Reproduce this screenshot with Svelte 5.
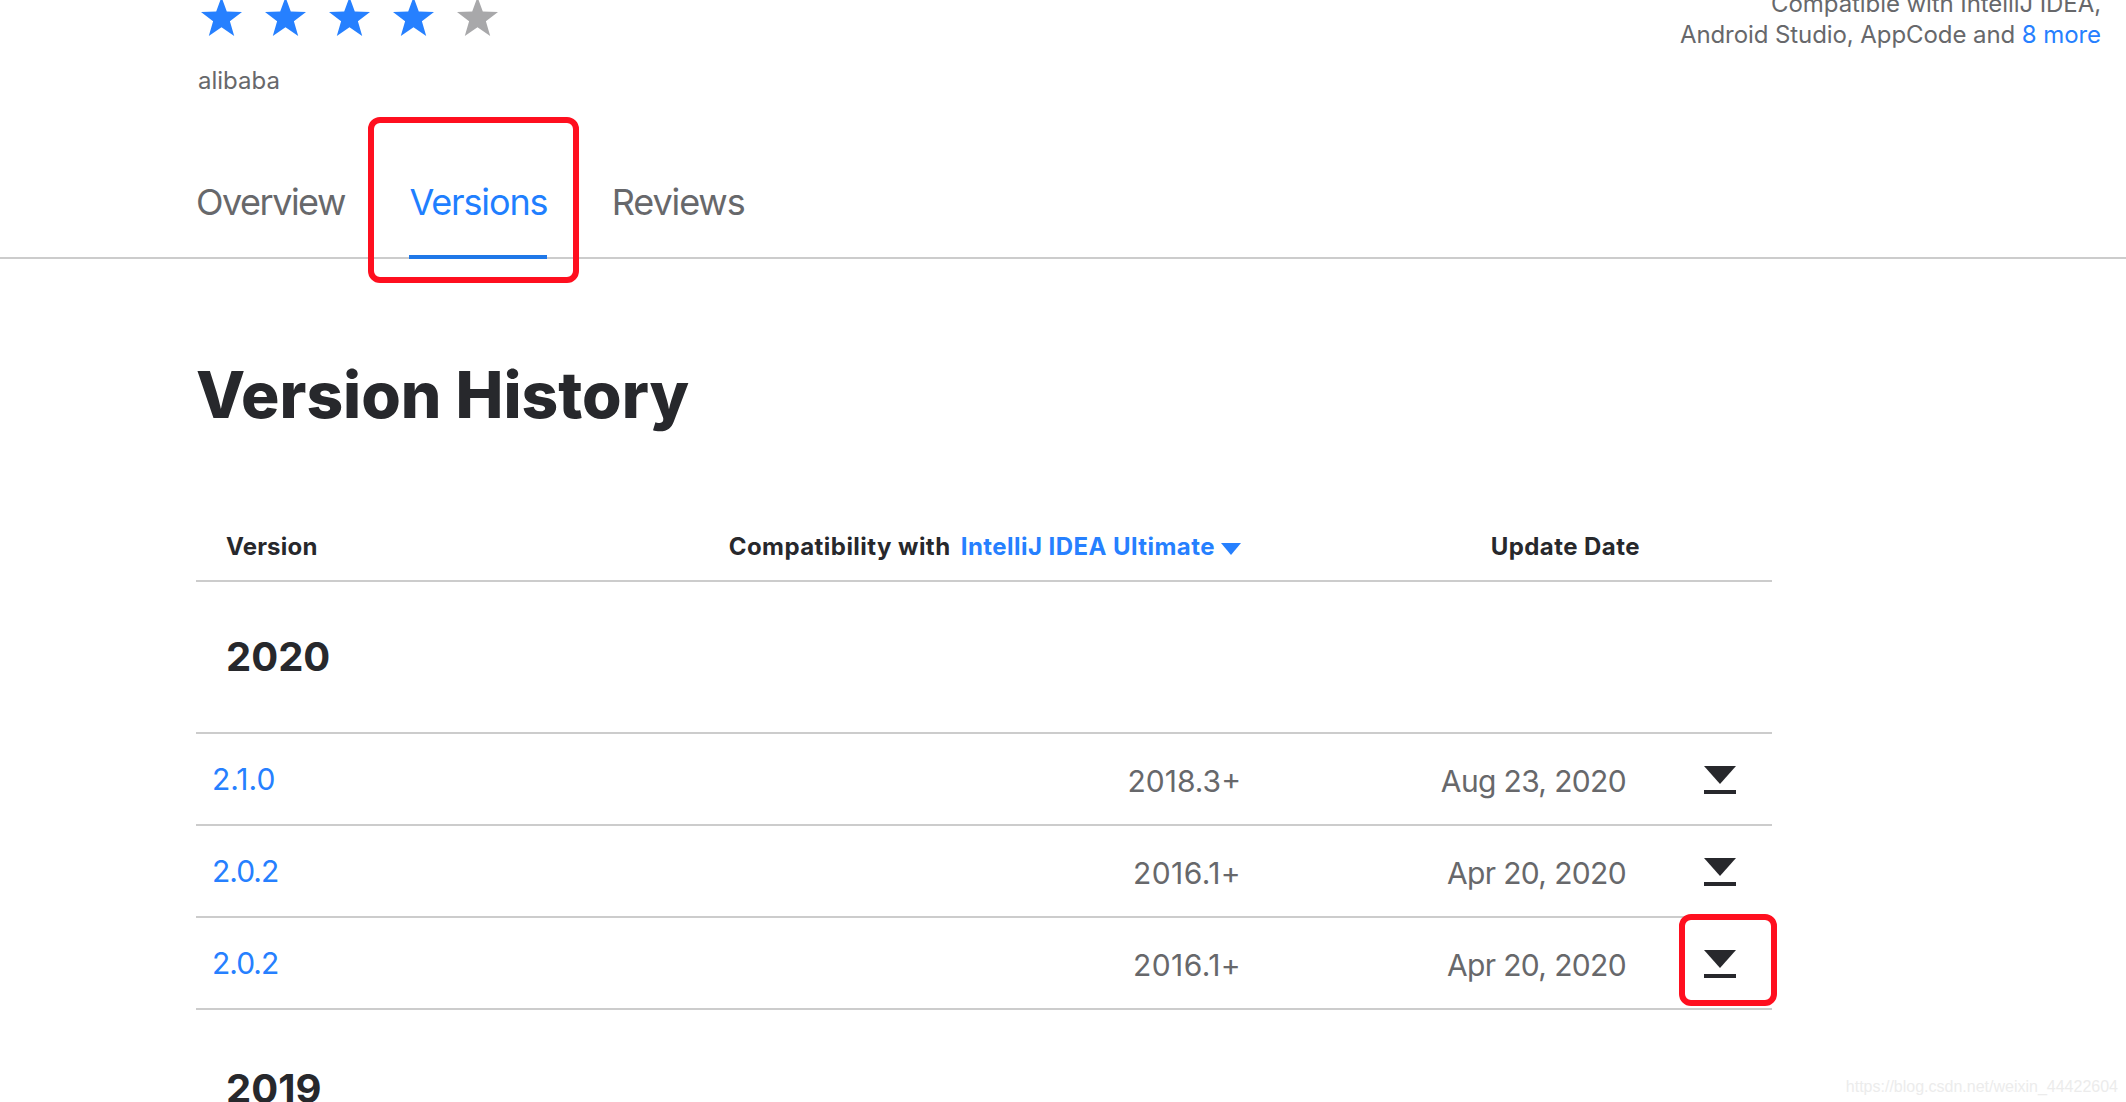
<script>
  const stars = [true, true, true, true, false];
  const rows = [
    { v: '2.1.0', c: '2018.3+', d: 'Aug 23, 2020' },
    { v: '2.0.2', c: '2016.1+', d: 'Apr 20, 2020' },
    { v: '2.0.2', c: '2016.1+', d: 'Apr 20, 2020' }
  ];
</script>

<div class="page">
  <header class="top">
    <div class="left">
      <div class="stars">
        {#each stars as on}
          <svg class="star" class:on viewBox="0 0 41 39" width="41" height="39"><polygon points="20.5,0 25.8,14.6 41,14.9 28.9,24.3 33.2,39 20.5,30.3 7.8,39 12.1,24.3 0,14.9 15.2,14.6" /></svg>
        {/each}
      </div>
      <div class="vendor">alibaba</div>
    </div>
    <div class="compat">Compatible with IntelliJ IDEA,<br />Android Studio, AppCode and <a href="#more">8 more</a></div>
  </header>

  <nav class="tabs">
    <span class="tab first">Overview</span>
    <span class="tab active">Versions</span>
    <span class="tab">Reviews</span>
  </nav>

  <main class="content">
    <h1>Version History</h1>
    <div class="table">
      <div class="grid head">
        <div class="h-version">Version</div>
        <div class="h-compat">Compatibility with <span class="link">IntelliJ IDEA Ultimate</span><svg class="caret" viewBox="0 0 20 12" width="20" height="12"><polygon points="0,0 20,0 10,12" /></svg></div>
        <div class="h-date">Update Date</div>
        <div></div>
      </div>
      <div class="year y2020">2020</div>
      {#each rows as r}
        <div class="grid row">
          <a class="ver" class:tight={!r.v.includes('1')} href="#v">{r.v}</a>
          <div class="num" class:wide={r.c.includes('.1')}>{r.c}</div>
          <div class="num date">{r.d}</div>
          <svg class="dl" viewBox="0 0 32 28" width="32" height="28"><polygon points="0,0 32,0 16,18" /><rect x="0" y="24" width="32" height="4" /></svg>
        </div>
      {/each}
      <div class="year y2019">2019</div>
    </div>
  </main>

  <div class="mark m1"></div>
  <div class="mark m2"></div>
  <div class="water">https://blog.csdn.net/weixin_44422604</div>
</div>

<style>
  :global(body) { margin: 0; background: #fff; }
  .page {
    position: relative;
    width: 2126px;
    height: 1102px;
    overflow: hidden;
    font-family: Inter, "Liberation Sans", sans-serif;
    color: #27282c;
  }
  .top {
    display: flex;
    justify-content: space-between;
    height: 117px;
    padding: 0 25px 0 196px;
  }
  .stars { display: flex; gap: 23px; margin-top: -3px; margin-left: 5px; height: 39px; }
  .star { fill: #a8a8aa; display: block; }
  .star.on { fill: #2680ff; }
  .vendor { margin-top: 30px; margin-left: 2px; font-size: 24px; line-height: 30px; color: #67686b; }
  .compat {
    margin-top: -12px;
    font-size: 24px;
    line-height: 31px;
    letter-spacing: -0.08px;
    text-align: right;
    color: #67686b;
  }
  .compat a, .link, .ver { color: #2680ff; text-decoration: none; }
  .tabs {
    display: flex;
    gap: 64.5px;
    padding-left: 196px;
    border-bottom: 2px solid #ccc;
    box-sizing: border-box;
    height: 142px;
    align-items: flex-start;
  }
  .tab {
    font-size: 36px;
    line-height: 44px;
    letter-spacing: -1.15px;
    padding-top: 63px;
    height: 75px;
    color: #67686b;
  }
  .tab.first { letter-spacing: -1.5px; }
  .tab.active {
    color: #1f7fff;
    border-bottom: 4px solid #1f78e8;
  }
  .content { padding-left: 196px; width: 1576px; }
  h1 {
    margin: 0;
    padding-top: 97px;
    font-size: 64px;
    line-height: 78px;
    font-weight: 800;
  }
  .table { margin-top: 83px; }
  .grid {
    display: grid;
    grid-template-columns: 480px 565px 385px 1fr;
    align-items: center;
  }
  .head {
    height: 59px;
    padding-bottom: 4px;
    border-bottom: 2px solid #ccc;
    font-size: 24px;
    font-weight: 700;
    letter-spacing: 0.45px;
  }
  .h-version { padding-left: 30px; letter-spacing: 0.2px; }
  .h-compat { text-align: right; white-space: nowrap; }
  .link { margin-left: 4px; }
  .caret { fill: #2680ff; margin-left: 6px; }
  .h-date { text-align: right; margin-right: -14px; }
  .year { font-size: 40px; font-weight: 700; padding-left: 30px; line-height: 48px; }
  .y2020 { padding-top: 51px; padding-bottom: 51px; border-bottom: 2px solid #ccc; }
  .y2019 { padding-top: 55px; }
  .row { height: 90px; border-bottom: 2px solid #ccc; }
  .ver { font-size: 30px; padding-left: 16px; margin-top: 0; }
  .ver.tight { letter-spacing: -1px; }
  .num { font-size: 30px; text-align: right; color: #67686b; margin-top: 4px; }
  .num.wide { letter-spacing: 0.4px; }
  .date { letter-spacing: -0.65px; }
  .dl { fill: #27282c; margin-left: 78px; margin-top: 32px; display: block; align-self: start; }
  .mark { position: absolute; border: 6px solid #ff0f1f; border-radius: 12px; box-sizing: border-box; }
  .m1 { left: 368px; top: 117px; width: 211px; height: 166px; }
  .m2 { left: 1679px; top: 914px; width: 98px; height: 92px; }
  .water {
    position: absolute;
    right: 8px;
    bottom: 6px;
    font-family: "Liberation Sans", sans-serif;
    font-size: 16px;
    color: #ececec;
  }
</style>
